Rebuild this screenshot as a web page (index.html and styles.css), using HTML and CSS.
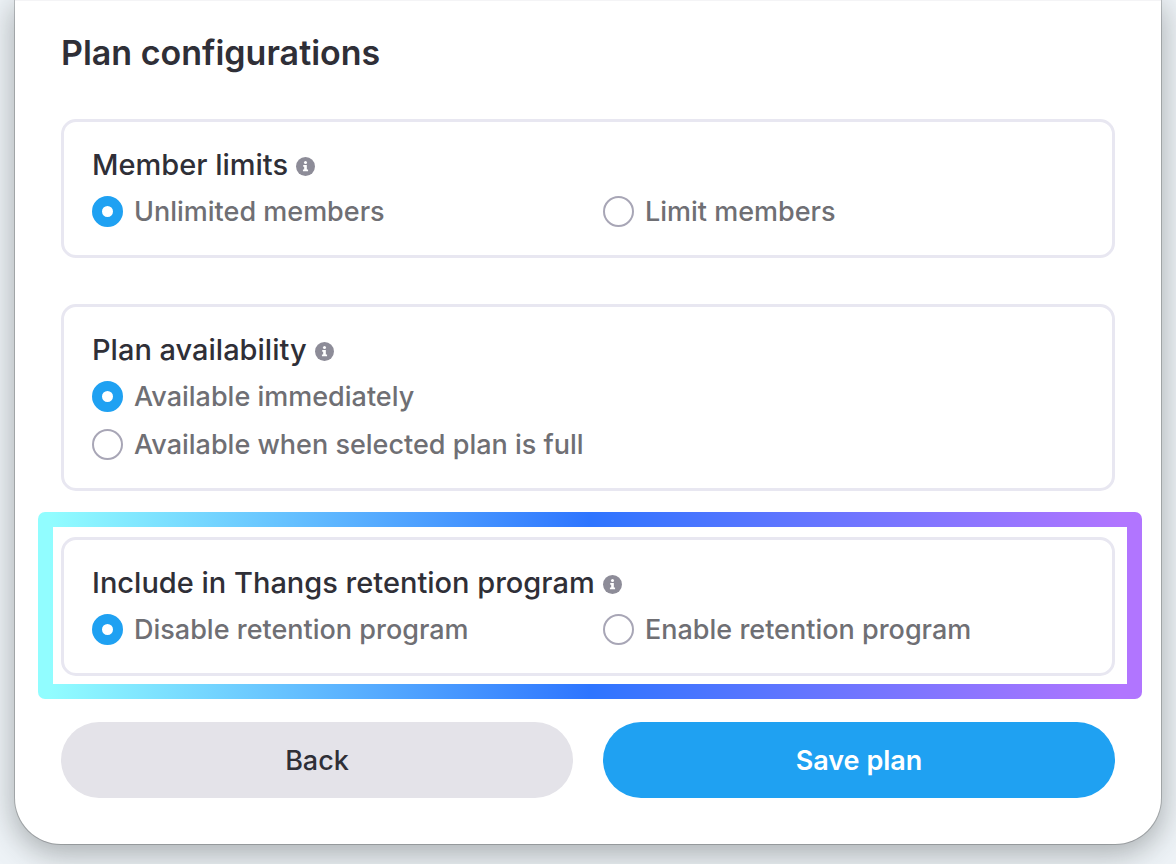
FILE: index.html
```html
<!DOCTYPE html>
<html lang="en">
<head>
<meta charset="utf-8">
<meta name="viewport" content="width=device-width, initial-scale=1">
<title>Plan configurations</title>
<link rel="stylesheet" href="styles.css">
</head>
<body>
<svg class="sprite" aria-hidden="true">
  <symbol id="info" viewBox="0 0 20 20">
    <circle cx="10" cy="10" r="10" fill="#8d8c98"/>
    <circle cx="10" cy="5.8" r="1.6" fill="#fff"/>
    <path d="M7.6 8.3h3.8v4.8h1.3V15H7.3v-1.9h1.3v-2.9h-1z" fill="#fff"/>
  </symbol>
</svg>
<form class="panel">
  <h1 class="title">Plan configurations</h1>

  <section class="card" role="radiogroup" aria-labelledby="members-title">
    <div class="card-head">
      <h2 class="card-title" id="members-title">Member limits</h2>
      <svg class="info"><use href="#info"/></svg>
    </div>
    <div class="options columns">
      <label class="option"><input class="radio" type="radio" name="members" checked>Unlimited members</label>
      <label class="option"><input class="radio" type="radio" name="members">Limit members</label>
    </div>
  </section>

  <section class="card" role="radiogroup" aria-labelledby="availability-title">
    <div class="card-head">
      <h2 class="card-title" id="availability-title">Plan availability</h2>
      <svg class="info"><use href="#info"/></svg>
    </div>
    <div class="options">
      <label class="option"><input class="radio" type="radio" name="availability" checked>Available immediately</label>
      <label class="option"><input class="radio" type="radio" name="availability">Available when selected plan is full</label>
    </div>
  </section>

  <section class="card highlighted" role="radiogroup" aria-labelledby="retention-title">
    <div class="card-head">
      <h2 class="card-title" id="retention-title">Include in Thangs retention program</h2>
      <svg class="info"><use href="#info"/></svg>
    </div>
    <div class="options columns">
      <label class="option"><input class="radio" type="radio" name="retention" checked>Disable retention program</label>
      <label class="option"><input class="radio" type="radio" name="retention">Enable retention program</label>
    </div>
  </section>

  <div class="actions">
    <button class="button back" type="button">Back</button>
    <button class="button save" type="submit">Save plan</button>
  </div>
</form>
</body>
</html>
```
FILE: styles.css
```css
* {
  box-sizing: border-box;
}

body {
  margin: 0;
  padding: 0 15px 20px;
  background: #eef3f7;
  font-family: Inter, "Liberation Sans", sans-serif;
  color: #2f2f37;
}

.sprite {
  display: none;
}

.panel {
  display: flex;
  flex-direction: column;
  gap: 46px;
  padding: 32px 46px 46px;
  border-top: 1px solid #f4f4f6;
  border-radius: 0 0 46px 46px;
  background: #fff;
  box-shadow: 0 0 0 1px rgba(0, 0, 0, 0.2), 0 8px 30px 2px rgba(40, 45, 45, 0.35);
}

.title {
  margin: 0;
  font-size: 34px;
  line-height: 40px;
  font-weight: 600;
}

.card {
  padding: 25px 28px 26px;
  border: 3px solid #e8e7f1;
  border-radius: 15px;
}

.card-head {
  display: flex;
  align-items: center;
  gap: 8px;
}

.card-title {
  margin: 0;
  font-size: 29px;
  line-height: 36px;
  font-weight: 500;
}

.info {
  width: 19px;
  height: 19px;
  margin-top: 2px;
}

.options {
  display: grid;
  gap: 13px 30px;
  padding-top: 11px;
}

.columns {
  grid-template-columns: 1fr 1fr;
}

.option {
  display: flex;
  align-items: center;
  gap: 11px;
  font-size: 27px;
  line-height: 35px;
  font-weight: 500;
  color: #6f6f74;
}

.radio {
  appearance: none;
  flex: none;
  width: 31px;
  height: 31px;
  margin: 0;
  border: 2px solid #a8a6b6;
  border-radius: 50%;
  background: #fff;
}

.radio:checked {
  border: 10px solid #1fa1f2;
}

.highlighted {
  position: relative;
}

.highlighted::before {
  content: "";
  position: absolute;
  inset: -28px -30px -26px -26px;
  border: 15px solid transparent;
  border-image: linear-gradient(90deg, #91fdff 1%, #2e75ff 50%, #b175ff 98%) 15;
  clip-path: inset(0 round 7px);
  pointer-events: none;
}

.actions {
  display: grid;
  grid-template-columns: 1fr 1fr;
  gap: 30px;
}

.button {
  height: 76px;
  padding: 2px 24px 0;
  border: 0;
  border-radius: 38px;
  font: 600 27px/34px Inter, "Liberation Sans", sans-serif;
}

.back {
  background: #e4e3e9;
  color: #2f2f37;
  font-weight: 500;
}

.save {
  background: #1fa1f2;
  color: #fff;
}
```
